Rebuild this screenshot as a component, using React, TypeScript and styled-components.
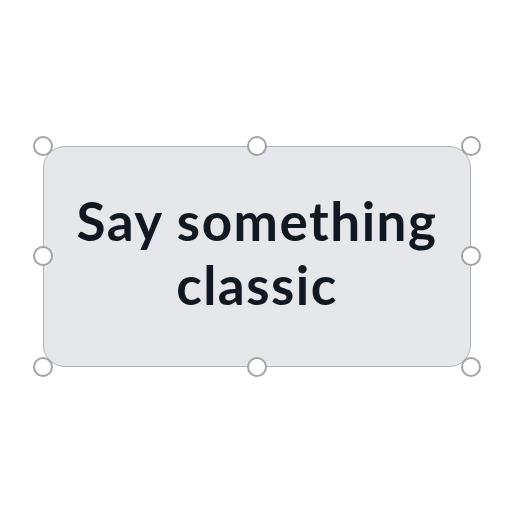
import React from "react";
import styled, { createGlobalStyle } from "styled-components";

const Global = createGlobalStyle`
  html, body { margin: 0; padding: 0; background: #ffffff; }
  #root { width: 512px; height: 512px; }
`;

const Page = styled.div`
  width: 512px;
  height: 512px;
  display: flex;
  align-items: center;
  justify-content: center;
`;

const Frame = styled.div`
  position: relative;
  width: 428px;
  height: 221px;
  margin-left: 2px;
`;

const Box = styled.div`
  box-sizing: border-box;
  width: 100%;
  height: 100%;
  background: #e5e7eb;
  border: 1.5px solid #afb2b9;
  border-radius: 22px;
  display: flex;
  align-items: center;
  justify-content: center;
  text-align: center;
  font-family: Lato, "Noto Sans", sans-serif;
  font-weight: 700;
  font-size: 53px;
  letter-spacing: 1.5px;
  line-height: 64px;
  color: #121821;
  padding: 0 12px 6px;
`;

const Handle = styled.div<{ $x: string; $y: string }>`
  position: absolute;
  left: ${(p) => p.$x};
  top: ${(p) => p.$y};
  width: 20px;
  height: 20px;
  box-sizing: border-box;
  margin: -10px 0 0 -10px;
  border-radius: 50%;
  background: #ffffff;
  border: 2px solid #a3a3a3;
`;

const handles: [string, string][] = [
  ["0%", "0%"],
  ["50%", "0%"],
  ["100%", "0%"],
  ["0%", "50%"],
  ["100%", "50%"],
  ["0%", "100%"],
  ["50%", "100%"],
  ["100%", "100%"],
];

export default function App() {
  return (
    <>
      <Global />
      <Page>
        <Frame>
          <Box>Say something classic</Box>
          {handles.map(([x, y], i) => (
            <Handle key={i} $x={x} $y={y} />
          ))}
        </Frame>
      </Page>
    </>
  );
}
